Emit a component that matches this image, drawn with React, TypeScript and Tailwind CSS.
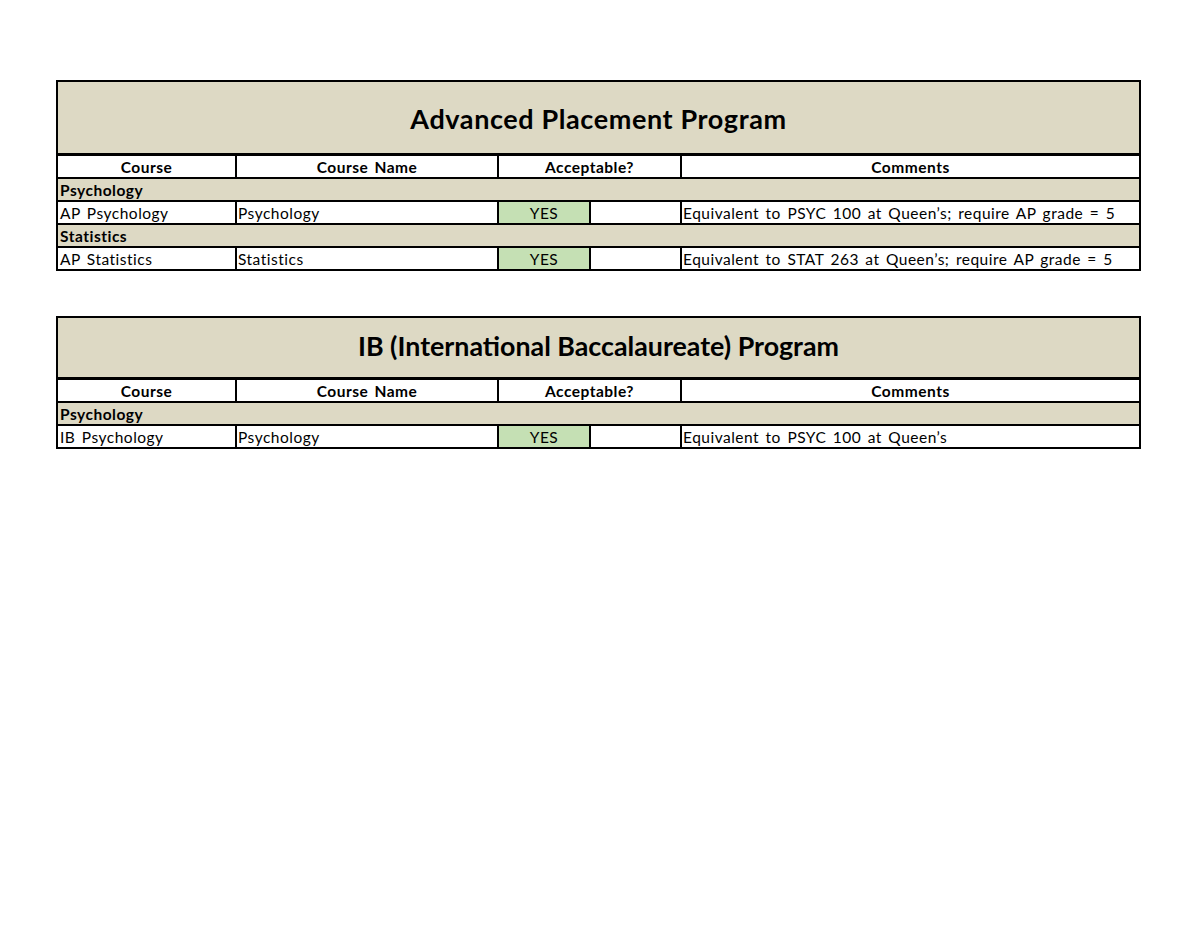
const FONT = { fontFamily: 'Lato, "Open Sans", sans-serif' };
const CELL_TEXT = { letterSpacing: '0.5px', wordSpacing: '2px' };

type Row =
  | { kind: 'section'; label: string }
  | { kind: 'item'; course: string; name: string; ok: string; comment: string };

const AP_ROWS: Row[] = [
  { kind: 'section', label: 'Psychology' },
  {
    kind: 'item',
    course: 'AP Psychology',
    name: 'Psychology',
    ok: 'YES',
    comment: 'Equivalent to PSYC 100 at Queen’s; require AP grade = 5',
  },
  { kind: 'section', label: 'Statistics' },
  {
    kind: 'item',
    course: 'AP Statistics',
    name: 'Statistics',
    ok: 'YES',
    comment: 'Equivalent to STAT 263 at Queen’s; require AP grade = 5',
  },
];

const IB_ROWS: Row[] = [
  { kind: 'section', label: 'Psychology' },
  {
    kind: 'item',
    course: 'IB Psychology',
    name: 'Psychology',
    ok: 'YES',
    comment: 'Equivalent to PSYC 100 at Queen’s',
  },
];

function HeaderRow() {
  return (
    <div className="flex h-[23px] border-b-2 border-black bg-white text-[15.5px] font-bold leading-none" style={CELL_TEXT}>
      <div className="flex w-[179px] items-center justify-center border-r-2 border-black pt-[3px]">Course</div>
      <div className="flex w-[262px] items-center justify-center border-r-2 border-black pt-[3px]">Course Name</div>
      <div className="flex w-[183px] items-center justify-center border-r-2 border-black pt-[3px]">Acceptable?</div>
      <div className="flex flex-1 items-center justify-center pt-[3px]">Comments</div>
    </div>
  );
}

function BodyRow({ row, last }: { row: Row; last: boolean }) {
  const edge = last ? 'h-[21px]' : 'h-[23px] border-b-2 border-black';
  if (row.kind === 'section') {
    return (
      <div
        className={`flex items-center bg-[#ddd9c4] pl-[2px] pt-[3px] text-[15.5px] font-bold leading-none ${edge}`}
        style={CELL_TEXT}
      >
        {row.label}
      </div>
    );
  }
  return (
    <div className={`flex bg-white text-[15.5px] leading-none ${edge}`} style={CELL_TEXT}>
      <div className="flex w-[179px] items-center border-r-2 border-black pl-[2px] pt-[3px]">{row.course}</div>
      <div className="flex w-[262px] items-center border-r-2 border-black pl-[1px] pt-[3px]">{row.name}</div>
      <div className="flex w-[92px] items-center justify-center border-r-2 border-black bg-[#c5e0b4] pt-[3px]">{row.ok}</div>
      <div className="w-[91px] border-r-2 border-black" />
      <div className="flex flex-1 items-center pl-[1px] pt-[3px] whitespace-nowrap">{row.comment}</div>
    </div>
  );
}

function ProgramTable({ title, titleClass, rows }: { title: string; titleClass: string; rows: Row[] }) {
  return (
    <div className="w-[1085px] border-2 border-black text-black">
      <div className={`flex items-center justify-center border-b-[3px] border-black bg-[#ddd9c4] font-bold ${titleClass}`}>
        {title}
      </div>
      <HeaderRow />
      {rows.map((row, i) => (
        <BodyRow key={i} row={row} last={i === rows.length - 1} />
      ))}
    </div>
  );
}

export default function App() {
  return (
    <div className="min-h-[927px] w-[1200px] bg-white pl-[56px] pt-[80px]" style={FONT}>
      <ProgramTable
        title="Advanced Placement Program"
        titleClass="h-[74px] pt-[4px] text-[27px] tracking-[0.6px]"
        rows={AP_ROWS}
      />
      <div className="h-[45px]" />
      <ProgramTable
        title="IB (International Baccalaureate) Program"
        titleClass="h-[62px] pb-[2px] text-[26.8px]"
        rows={IB_ROWS}
      />
    </div>
  );
}
